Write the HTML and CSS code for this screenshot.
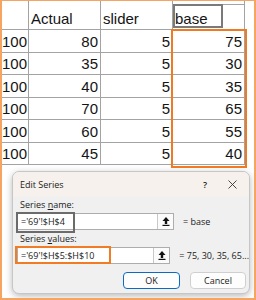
FILE: index.html
```html
<!DOCTYPE html>
<html>
<head>
<meta charset="utf-8">
<link rel="stylesheet" href="styles.css">
</head>
<body>
<div class="frame">
  <div class="sheet">
    <div class="c a"></div><div class="c h">Actual</div><div class="c h">slider</div><div class="c h">base</div>
    <div class="c a">100</div><div class="c">80</div><div class="c">5</div><div class="c">75</div>
    <div class="c a">100</div><div class="c">35</div><div class="c">5</div><div class="c">30</div>
    <div class="c a">100</div><div class="c">40</div><div class="c">5</div><div class="c">35</div>
    <div class="c a">100</div><div class="c">70</div><div class="c">5</div><div class="c">65</div>
    <div class="c a">100</div><div class="c">60</div><div class="c">5</div><div class="c">55</div>
    <div class="c a">100</div><div class="c">45</div><div class="c">5</div><div class="c">40</div>
  </div>
  <div class="headline"></div>
  <div class="headbox"></div>
  <div class="selbox"></div>

  <div class="dialog">
    <div class="titlebar">
      <span class="title">Edit Series</span>
      <span class="help">?</span>
      <svg class="close" width="9" height="9" viewBox="0 0 9 9"><path d="M0.5 0.5 L8.5 8.5 M8.5 0.5 L0.5 8.5" stroke="#333" stroke-width="0.9" fill="none"/></svg>
    </div>
    <div class="body">
      <div class="label">Series <u>n</u>ame:</div>
      <div class="row">
        <div class="input">
          <span class="val">='69'!$H$4</span>
          <span class="pick"><svg width="8" height="9" viewBox="0 0 8 9"><path d="M4 0 L0.5 4 L2.8 4 L2.8 7 L5.2 7 L5.2 4 L7.5 4 Z" fill="#111"/><rect x="0.5" y="7.8" width="7" height="1.2" fill="#111"/></svg></span>
        </div>
        <span class="result">= base</span>
        <div class="mark-gray"></div>
      </div>
      <div class="label second">Series <u>v</u>alues:</div>
      <div class="row">
        <div class="input">
          <span class="val">='69'!$H$5:$H$10</span>
          <span class="pick"><svg width="8" height="9" viewBox="0 0 8 9"><path d="M4 0 L0.5 4 L2.8 4 L2.8 7 L5.2 7 L5.2 4 L7.5 4 Z" fill="#111"/><rect x="0.5" y="7.8" width="7" height="1.2" fill="#111"/></svg></span>
        </div>
        <span class="result">= 75, 30, 35, 65...</span>
        <div class="mark-orange"></div>
      </div>
      <div class="buttons">
        <div class="btn ok">OK</div>
        <div class="btn">Cancel</div>
      </div>
    </div>
  </div>
</div>
</body>
</html>
```
FILE: styles.css
```css
html, body {
  margin: 0;
  padding: 0;
  background: #fff;
}

.frame {
  width: 256px;
  height: 300px;
  box-sizing: border-box;
  border: 2px solid #f5a462;
  border-top-width: 1px;
  position: relative;
  overflow: hidden;
  background: #fff;
}

.sheet {
  display: grid;
  grid-template-columns: 27px 72px 72px 72px;
  grid-template-rows: 29px 23px 22px 23px 22px 23px 22px;
  font-family: "Liberation Sans", Arial, sans-serif;
  font-size: 15px;
  color: #141414;
}

.c {
  box-sizing: border-box;
  border-right: 1px solid #a3a3a3;
  border-bottom: 1px solid #a3a3a3;
  display: flex;
  align-items: center;
  justify-content: flex-end;
  padding-right: 2px;
  line-height: 15px;
  white-space: nowrap;
  overflow: hidden;
}

.c.a {
  padding-right: 1px;
}

.c.h {
  justify-content: flex-start;
  align-items: flex-end;
  padding: 0 0 3px 2px;
}

.headline {
  position: absolute;
  left: 220px;
  top: 3px;
  width: 23px;
  height: 0;
  border-top: 1px solid #a3a3a3;
}

.headbox {
  position: absolute;
  left: 171px;
  top: 3px;
  width: 50px;
  height: 24px;
  box-sizing: border-box;
  border: 2px solid #7a7a7a;
}

.selbox {
  position: absolute;
  z-index: 2;
  left: 169px;
  top: 28px;
  width: 76px;
  height: 139px;
  box-sizing: border-box;
  border: 2px solid #f07a22;
}

.dialog {
  margin: 6px 0 0 10px;
  width: 238px;
  box-sizing: border-box;
  border: 1px solid #c6c6c6;
  border-radius: 7px;
  background: #f0f0f0;
  box-shadow: 0 2px 7px rgba(0, 0, 0, 0.28);
  font-family: "Open Sans", "Noto Sans", sans-serif;
  font-size: 9px;
  color: #1a1a1a;
  overflow: hidden;
}

.titlebar {
  height: 25px;
  display: flex;
  align-items: center;
  padding-left: 7px;
  background: #f6f1ec;
}

.title {
  flex: 1;
}

.help {
  width: 12px;
  text-align: center;
  font-weight: 600;
  font-size: 9px;
  margin-right: 17px;
}

.close {
  margin-right: 12px;
}

.body {
  padding: 2px 0 4px 7px;
}

.label {
  height: 12px;
  line-height: 12px;
  margin-bottom: 2px;
}

.label.second {
  margin-top: 3px;
}

.row {
  position: relative;
  height: 17px;
  display: flex;
  align-items: center;
}

.input {
  margin-left: -3px;
  width: 157px;
  height: 17px;
  box-sizing: border-box;
  border: 1px solid #adadad;
  background: #fff;
  display: flex;
  align-items: center;
}

.val {
  flex: 1;
  padding-left: 3px;
  line-height: 12px;
  white-space: nowrap;
}

.pick {
  width: 16px;
  height: 15px;
  box-sizing: border-box;
  border-left: 1px solid #c8c8c8;
  background: #fbfbfb;
  display: flex;
  align-items: center;
  justify-content: center;
}

.result {
  margin-left: 9px;
  white-space: nowrap;
}

.mark-gray {
  position: absolute;
  left: -4px;
  top: -1px;
  width: 59px;
  height: 21px;
  box-sizing: border-box;
  border: 2px solid #6b6b6b;
}

.mark-orange {
  position: absolute;
  left: -5px;
  top: -1px;
  width: 96px;
  height: 18px;
  box-sizing: border-box;
  border: 2px solid #f27c24;
}

.buttons {
  margin-top: 8px;
  display: flex;
  gap: 10px;
  padding-left: 103px;
}

.btn {
  width: 56px;
  height: 17px;
  box-sizing: border-box;
  border: 1px solid #cfcfcf;
  border-radius: 4px;
  background: #fdfdfd;
  display: flex;
  align-items: center;
  justify-content: center;
}

.btn.ok {
  width: 57px;
  border-color: #0a6ac4;
}
```
